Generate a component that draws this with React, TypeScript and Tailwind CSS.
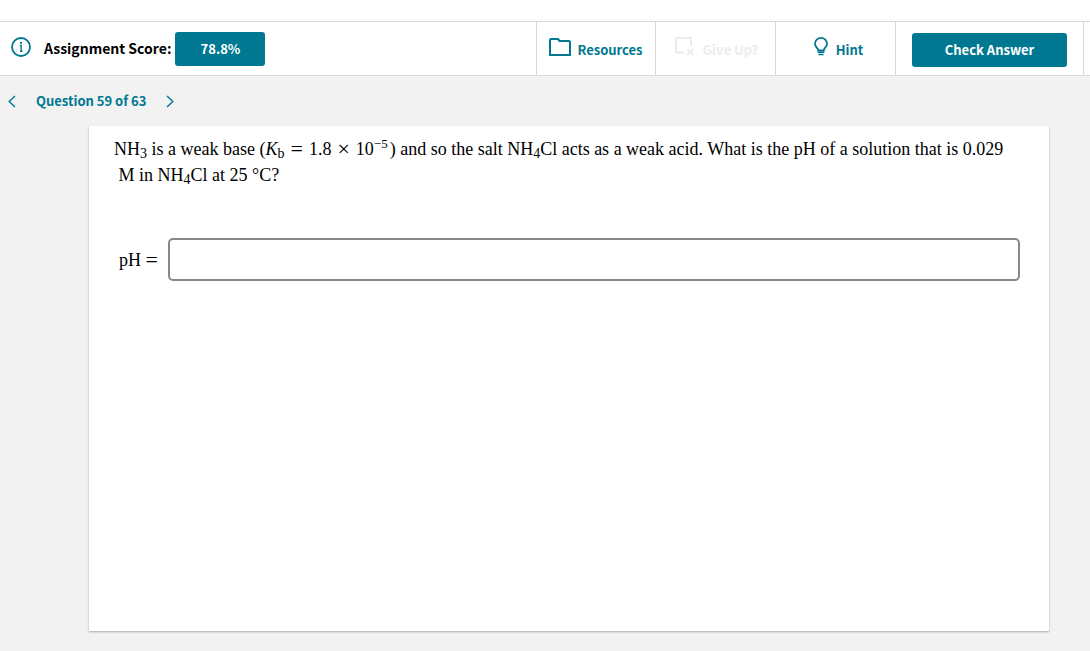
import React from 'react';

type IconProps = { className?: string };

const InfoIcon: React.FC<IconProps> = ({ className }) => (
  <svg className={className} width="20" height="20" viewBox="0 0 20 20" fill="none" stroke="currentColor" aria-hidden="true">
    <circle cx="10" cy="10" r="9" strokeWidth="1.8" />
    <path d="M8.8 8.5h1.4v6M9 14.3h2.4" strokeWidth="1.4" />
    <circle cx="10" cy="5.9" r="1.1" fill="currentColor" stroke="none" />
  </svg>
);

const FolderIcon: React.FC<IconProps> = ({ className }) => (
  <svg className={className} width="22" height="18" viewBox="0 0 22 18" fill="none" stroke="currentColor" strokeWidth="2" aria-hidden="true">
    <path d="M1 17V1.8L1.8 1h7.4l1.2 2H20.2l.8.8V17z" />
  </svg>
);

const GiveUpIcon: React.FC<IconProps> = ({ className }) => (
  <svg className={className} width="20" height="20" viewBox="0 0 20 20" fill="none" stroke="currentColor" strokeWidth="2" aria-hidden="true">
    <path d="M9.5 15.5H1V1h15v8M12.3 12l6 6M18.3 12l-6 6" />
  </svg>
);

const BulbIcon: React.FC<IconProps> = ({ className }) => (
  <svg className={className} width="14" height="19" viewBox="0 0 14 19" fill="none" stroke="currentColor" aria-hidden="true">
    <path d="M4.2 13.4C4.2 10.8 1 10.2 1 6.7a6 5.8 0 0 1 12 0c0 3.5-3.2 4.1-3.2 6.7z" strokeWidth="1.8" />
    <path d="M3.6 15.2h6.8M4.4 17.5h5.2" strokeWidth="1.7" />
  </svg>
);

const ChevronIcon: React.FC<IconProps> = ({ className }) => (
  <svg className={className} width="8" height="13" viewBox="0 0 8 13" fill="none" stroke="currentColor" strokeWidth="1.4" aria-hidden="true">
    <path d="M7 1L1.2 6.5 7 12" />
  </svg>
);

const Header: React.FC = () => (
  <header className="flex h-[55px] border-y border-[#d8d8d8] bg-white">
    <div className="flex flex-1 items-center pl-[11px]">
      <button type="button" aria-label="Score details" className="mr-[13px] pb-1 text-[#007891]">
        <InfoIcon className="block" />
      </button>
      <span className="pb-0.5 text-[14px] whitespace-nowrap text-black">Assignment Score:</span>
      <button type="button" className="ml-1 h-[34px] w-[90px] rounded-[3px] bg-[#007891] text-white">
        78.8%
      </button>
    </div>
    <button type="button" className="flex w-[119px] items-center justify-center gap-1.5 border-l border-[#d8d8d8] pt-0.5 text-[#007891]">
      <FolderIcon className="mb-1.5" />
      Resources
    </button>
    <button type="button" disabled className="flex w-[120px] items-center justify-center gap-2 border-l border-[#d8d8d8] pt-0.5 pl-0.5 text-[#ececec]">
      <GiveUpIcon className="mb-1.5" />
      Give Up?
    </button>
    <button type="button" className="flex w-[120px] items-center justify-center gap-2 border-l border-[#d8d8d8] pt-0.5 pl-1.5 text-[#007891]">
      <BulbIcon className="mb-1.5" />
      Hint
    </button>
    <div className="flex w-[189px] items-center border-x border-[#d8d8d8] px-4 pt-0.5">
      <button type="button" className="h-[34px] w-full rounded-[3px] bg-[#007891] text-white">
        Check Answer
      </button>
    </div>
    <div className="w-1.5" />
  </header>
);

const QuestionNav: React.FC = () => (
  <nav className="flex h-[50px] items-center pl-2 text-[#007891]">
    <button type="button" aria-label="Previous question">
      <ChevronIcon className="block" />
    </button>
    <span className="mx-5">Question 59 of 63</span>
    <button type="button" aria-label="Next question">
      <ChevronIcon className="block rotate-180" />
    </button>
  </nav>
);

const Sub: React.FC<{ children: React.ReactNode }> = ({ children }) => (
  <sub className="bottom-0 align-[-3px] text-[14px] leading-none">{children}</sub>
);

const Op: React.FC<{ children: React.ReactNode }> = ({ children }) => (
  <span className="mx-[6px] align-[-1px] text-[22px] leading-none">{children}</span>
);

const Question: React.FC = () => (
  <main className="mr-[41px] mb-5 ml-[89px] flex-1 bg-white px-[25px] pt-[10px] font-['Liberation_Serif',serif] text-[18px] leading-[26px] font-normal text-black shadow-[0_1px_2px_rgba(0,0,0,0.3)]">
    <p className="pr-4">
      NH<Sub>3</Sub> is a weak base (<i>K</i>
      <Sub>b</Sub>
      <Op>=</Op>1.8<Op>×</Op>10
      <sup className="top-0 mr-0.5 align-[7px] text-[13px] leading-none">−5</sup>) and so the salt NH<Sub>4</Sub>Cl acts as a weak acid. What is the pH of a solution that is 0.029{' '}
      &nbsp;M in NH<Sub>4</Sub>Cl at 25 °C?
    </p>
    <div className="mt-[50px] flex items-center pr-1 pl-[5px]">
      <label htmlFor="ph">
        pH <span className="align-[-1px] text-[22px] leading-none">=</span>
      </label>
      <input
        id="ph"
        type="text"
        autoComplete="off"
        className="ml-[10px] h-[43px] min-w-0 flex-1 rounded-[5px] border-2 border-[#888888] bg-white px-3 outline-none"
      />
    </div>
  </main>
);

export default function App() {
  return (
    <div className="flex min-h-screen flex-col bg-[#f2f2f2] font-['Noto_Sans_CJK_SC',sans-serif] text-[13px] leading-5 font-bold">
      <div className="h-[21px] bg-white" />
      <Header />
      <QuestionNav />
      <Question />
    </div>
  );
}
